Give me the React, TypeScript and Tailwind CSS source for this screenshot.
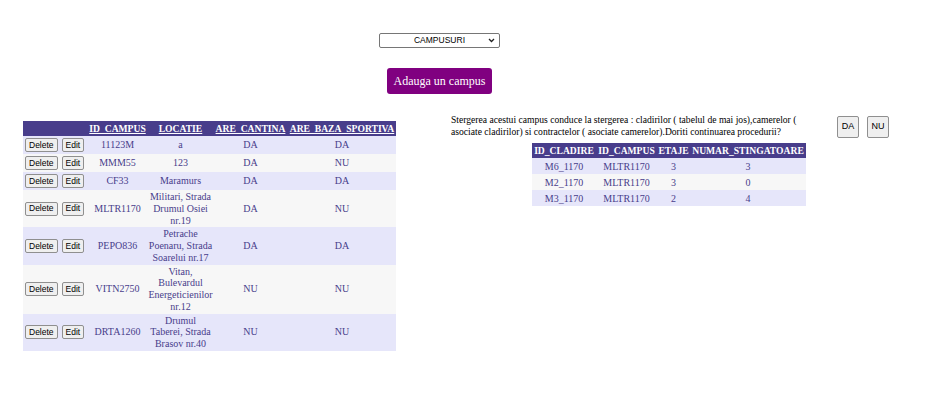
import React from "react";

const campusuri = [
  { id: "11123M", locatie: ["a"], cantina: "DA", baza: "DA" },
  { id: "MMM55", locatie: ["123"], cantina: "DA", baza: "NU" },
  { id: "CF33", locatie: ["Maramurs"], cantina: "DA", baza: "DA" },
  { id: "MLTR1170", locatie: ["Militari, Strada", "Drumul Osiei", "nr.19"], cantina: "DA", baza: "NU" },
  { id: "PEPO836", locatie: ["Petrache", "Poenaru, Strada", "Soarelui nr.17"], cantina: "DA", baza: "DA" },
  { id: "VITN2750", locatie: ["Vitan,", "Bulevardul", "Energeticienilor", "nr.12"], cantina: "NU", baza: "NU" },
  { id: "DRTA1260", locatie: ["Drumul", "Taberei, Strada", "Brasov nr.40"], cantina: "NU", baza: "NU" },
];

const cladiri = [
  { id: "M6_1170", campus: "MLTR1170", etaje: "3", stingatoare: "3" },
  { id: "M2_1170", campus: "MLTR1170", etaje: "3", stingatoare: "0" },
  { id: "M3_1170", campus: "MLTR1170", etaje: "2", stingatoare: "4" },
];

const SmallButton = ({ label }: { label: string }) => (
  <button className="h-[14px] px-[3px] bg-[#efefef] border border-[#8f8f8f] rounded-[2px] text-[8.5px] leading-none text-black font-['Liberation_Sans',Arial,sans-serif]">
    {label}
  </button>
);

export default function App() {
  return (
    <div className="w-[932px] h-[395px] bg-white font-['Liberation_Serif','Times_New_Roman',serif] text-[10px]">
      <div className="w-[879px] flex flex-col items-center pt-[33px]">
        <div className="relative w-[121px] h-[15px] border border-[#767676] rounded-[2px] bg-white flex items-center justify-center font-['Liberation_Sans',Arial,sans-serif] text-[8.5px] text-black">
          CAMPUSURI
          <svg className="absolute right-[4px] top-[4px]" width="7" height="5" viewBox="0 0 7 5">
            <path d="M1 1l2.5 2.5L6 1" fill="none" stroke="#222" strokeWidth="1.3" />
          </svg>
        </div>
        <button className="mt-[20px] w-[105px] h-[26px] bg-[#800080] rounded-[3px] text-white text-[12px] whitespace-nowrap font-['Liberation_Serif',serif]">
          Adauga un campus
        </button>
      </div>

      <div className="flex pl-[23px] mt-[22px]">
        <table className="w-[373px] table-fixed border-collapse text-[#483d8b] self-start mt-[5px]">
          <colgroup>
            <col className="w-[64px]" />
            <col className="w-[61px]" />
            <col className="w-[65px]" />
            <col className="w-[75px]" />
            <col className="w-[108px]" />
          </colgroup>
          <thead>
            <tr className="bg-[#483d8b] text-white">
              <th className="p-0 h-[15px]"></th>
              <th className="underline font-bold p-0 text-[9.6px] leading-[15px]">ID_CAMPUS</th>
              <th className="underline font-bold p-0 text-[9.6px] leading-[15px]">LOCATIE</th>
              <th className="underline font-bold p-0 text-[9.6px] leading-[15px]">ARE_CANTINA</th>
              <th className="underline font-bold p-0 text-[9.6px] leading-[15px] whitespace-nowrap">ARE_BAZA_SPORTIVA</th>
            </tr>
          </thead>
          <tbody>
            {campusuri.map((c, i) => (
              <tr key={c.id} className={i % 2 === 0 ? "bg-[#e6e6fa]" : "bg-[#f7f7f7]"}>
                <td className="py-[2px] pl-[2px] pr-0">
                  <div className="flex gap-[4px]">
                    <SmallButton label="Delete" />
                    <SmallButton label="Edit" />
                  </div>
                </td>
                <td className="text-center leading-[11.75px] py-[1px]">{c.id}</td>
                <td className="text-center leading-[11.75px] py-[1px] px-0 whitespace-nowrap">
                  {c.locatie.map((line, j) => (
                    <div key={j}>{line}</div>
                  ))}
                </td>
                <td className="text-center leading-[11.75px] py-[1px]">{c.cantina}</td>
                <td className="text-center leading-[11.75px] py-[1px]">{c.baza}</td>
              </tr>
            ))}
          </tbody>
        </table>

        <div className="ml-[55px] flex items-start">
          <div className="flex flex-col">
            <p className="-mt-[2px] text-[9.6px] leading-[12px] text-black whitespace-nowrap">
              Stergerea acestui campus conduce la stergerea : cladirilor ( tabelul de mai jos),camerelor (
              <br />
              asociate cladirilor) si contractelor ( asociate camerelor).Doriti continuarea procedurii?
            </p>
            <table className="ml-[81px] mt-[5px] w-[274px] table-fixed border-collapse text-[#483d8b]">
              <colgroup>
                <col className="w-[64px]" />
                <col className="w-[61px]" />
                <col className="w-[33px]" />
                <col className="w-[116px]" />
              </colgroup>
              <thead>
                <tr className="bg-[#483d8b] text-white">
                  <th className="font-bold p-0 text-[9.6px] leading-[15px] whitespace-nowrap">ID_CLADIRE</th>
                  <th className="font-bold p-0 text-[9.6px] leading-[15px] whitespace-nowrap">ID_CAMPUS</th>
                  <th className="font-bold p-0 text-[9.6px] leading-[15px] whitespace-nowrap">ETAJE</th>
                  <th className="font-bold p-0 text-[9.6px] leading-[15px] whitespace-nowrap">NUMAR_STINGATOARE</th>
                </tr>
              </thead>
              <tbody>
                {cladiri.map((c, i) => (
                  <tr key={c.id} className={i % 2 === 0 ? "bg-[#e6e6fa]" : "bg-[#f7f7f7]"}>
                    <td className="text-center h-[16px] p-0">{c.id}</td>
                    <td className="text-center h-[16px] p-0">{c.campus}</td>
                    <td className="text-center h-[16px] p-0">{c.etaje}</td>
                    <td className="text-center h-[16px] p-0">{c.stingatoare}</td>
                  </tr>
                ))}
              </tbody>
            </table>
          </div>
          <div className="ml-[31px] flex gap-[8px]">
            <button className="w-[22px] h-[22px] bg-[#efefef] border border-[#8f8f8f] rounded-[2px] text-[9px] font-['Liberation_Sans',Arial,sans-serif] text-black">
              DA
            </button>
            <button className="w-[22px] h-[22px] bg-[#efefef] border border-[#8f8f8f] rounded-[2px] text-[9px] font-['Liberation_Sans',Arial,sans-serif] text-black">
              NU
            </button>
          </div>
        </div>
      </div>
    </div>
  );
}
